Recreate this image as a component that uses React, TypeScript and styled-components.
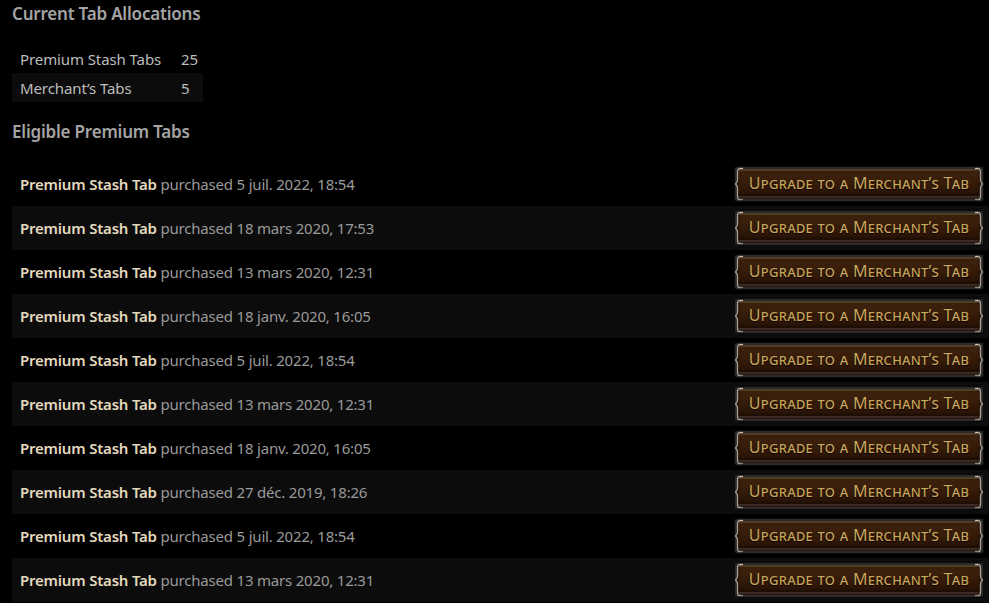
import React from 'react';
import styled, { createGlobalStyle } from 'styled-components';

interface Purchase {
  date: string;
}

const GlobalStyle = createGlobalStyle`
  html, body {
    margin: 0;
    padding: 0;
    background: #000;
  }
  body {
    font-family: "Noto Sans", "Open Sans", sans-serif;
  }
`

const Page = styled.div`
  width: 989px;
  height: 603px;
  overflow: hidden;
  padding-left: 12px;
  box-sizing: border-box;
  background: #000;
`

const Heading = styled.h2<{top: number}>`
  margin: ${(props) => props.top}px 0 0 0;
  height: 22px;
  line-height: 22px;
  font-size: 17px;
  font-weight: 600;
  color: #a4a4a4;
  letter-spacing: -0.2px;
`

const Allocations = styled.div`
  margin-top: 19px;
  width: 191px;
  display: flex;
  flex-direction: column;
  margin-bottom: 19px;
`

const AllocRow = styled.div<{shaded: boolean}>`
  display: grid;
  grid-template-columns: 161px 30px;
  height: 29px;
  align-items: center;
  padding-left: 8px;
  box-sizing: border-box;
  font-size: 15px;
  letter-spacing: -0.1px;
  color: #bcbcbc;
  background: ${(props) => props.shaded ? '#0c0c0c' : 'transparent'};
`

const List = styled.div`
  margin-top: 19px;
  display: flex;
  flex-direction: column;
`

const Row = styled.div<{shaded: boolean}>`
  display: flex;
  align-items: center;
  justify-content: space-between;
  height: 44px;
  padding: 0 6px 0 8px;
  box-sizing: border-box;
  background: ${(props) => props.shaded ? '#0c0c0c' : 'transparent'};
`

const Label = styled.div`
  font-size: 15px;
  color: #9a9a9a;
  white-space: nowrap;
  letter-spacing: -0.2px;
`

const TabName = styled.span`
  color: #e3d9bf;
  font-weight: 600;
`

const UpgradeButton = styled.button`
  position: relative;
  width: 248px;
  height: 34px;
  padding: 0;
  cursor: pointer;
  border: 2px solid #2c2a28;
  border-radius: 2px;
  background:
    linear-gradient(to bottom,
      #6e5234 0px, #5a4029 2px,
      #3e220e 2px, #371c0a 45%, #2c1507 75%, #1e0d04 calc(100% - 3px),
      #4a3626 calc(100% - 3px), #2e2119 100%);
  box-shadow: 0 0 0 1px #0a0a0a, inset 0 0 5px rgba(0, 0, 0, 0.5);
  display: flex;
  align-items: center;
  justify-content: center;
  color: #caa55a;
  font-family: "Noto Sans", "Open Sans", sans-serif;
  font-variant: small-caps;
  font-size: 16px;
  letter-spacing: 0.3px;
  line-height: 1;
`

const ButtonEnd = styled.svg<{side: 'left' | 'right'}>`
  position: absolute;
  top: -2px;
  ${(props) => props.side === 'left' ? 'left: -3px;' : 'right: -3px; transform: scaleX(-1);'}
  width: 10px;
  height: 34px;
`

const ButtonText = styled.span`
  position: relative;
  top: -1px;
  text-shadow: 0 1px 1px #000;
`

const Bracket: React.FC<{side: 'left' | 'right'}> = ({ side }) => (
  <ButtonEnd side={side} viewBox="0 0 10 34">
    <path d="M6 1.5 C3.5 1.5 3.5 3 3.5 6 L3.5 13 C3.5 15 2.5 16 1.5 17 C2.5 18 3.5 19 3.5 21 L3.5 28 C3.5 31 3.5 32.5 6 32.5"
      fill="none" stroke="#a39d96" strokeWidth="1.3" />
    <path d="M6 1.5 L9 1.5" stroke="#c8c2ba" strokeWidth="1.3" />
    <path d="M6 32.5 L9 32.5" stroke="#8a857f" strokeWidth="1.3" />
  </ButtonEnd>
)

const purchases: Purchase[] = [
  { date: '5 juil. 2022, 18:54' },
  { date: '18 mars 2020, 17:53' },
  { date: '13 mars 2020, 12:31' },
  { date: '18 janv. 2020, 16:05' },
  { date: '5 juil. 2022, 18:54' },
  { date: '13 mars 2020, 12:31' },
  { date: '18 janv. 2020, 16:05' },
  { date: '27 déc. 2019, 18:26' },
  { date: '5 juil. 2022, 18:54' },
  { date: '13 mars 2020, 12:31' },
];

const App: React.FC = () => {
  return (
    <Page>
      <GlobalStyle />
      <Heading top={3}>Current Tab Allocations</Heading>
      <Allocations>
        <AllocRow shaded={false}>
          <span>Premium Stash Tabs</span>
          <span>25</span>
        </AllocRow>
        <AllocRow shaded={true}>
          <span>Merchant’s Tabs</span>
          <span>5</span>
        </AllocRow>
      </Allocations>
      <Heading top={0}>Eligible Premium Tabs</Heading>
      <List>
        {purchases.map((p, i) => (
          <Row key={i} shaded={i % 2 === 1}>
            <Label>
              <TabName>Premium Stash Tab</TabName> purchased {p.date}
            </Label>
            <UpgradeButton>
              <Bracket side="left" />
              <ButtonText>Upgrade to a Merchant’s Tab</ButtonText>
              <Bracket side="right" />
            </UpgradeButton>
          </Row>
        ))}
      </List>
    </Page>
  );
}

export default App;
